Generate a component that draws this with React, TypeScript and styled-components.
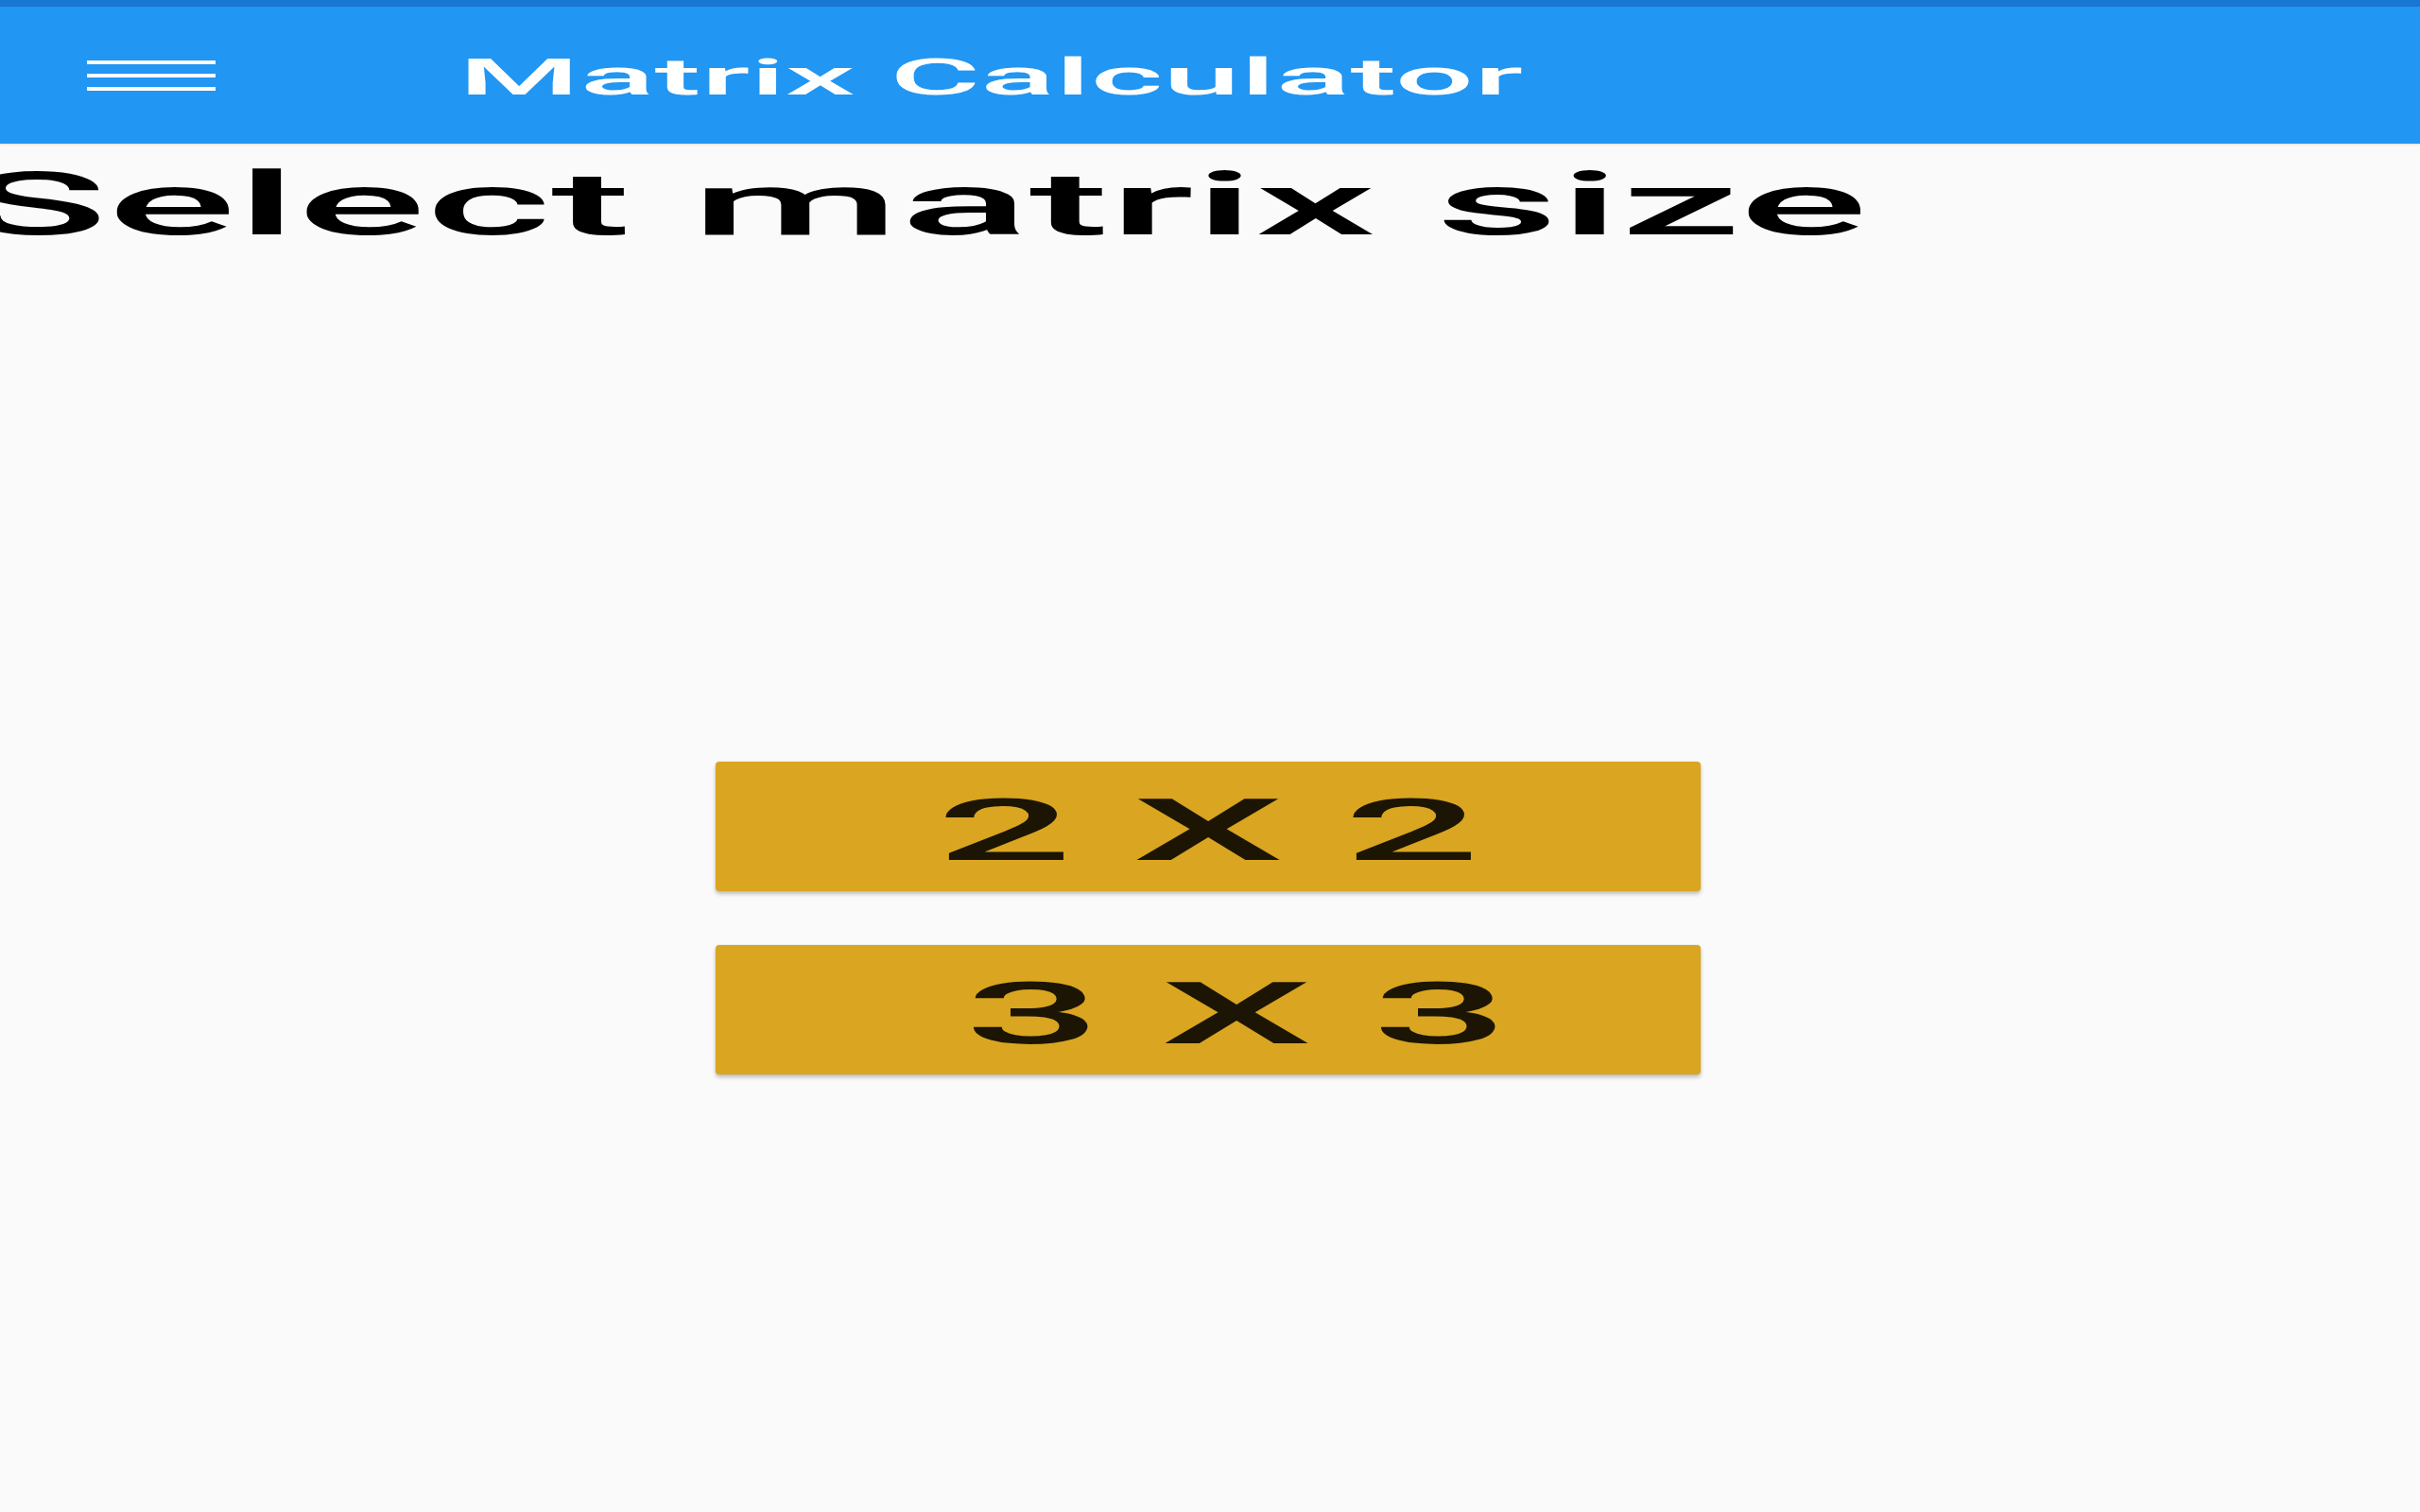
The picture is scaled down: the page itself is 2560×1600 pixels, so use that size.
import React, { useLayoutEffect, useRef, useState } from "react";
import styled, { createGlobalStyle } from "styled-components";

const GlobalStyle = createGlobalStyle`
  html, body {
    margin: 0;
    padding: 0;
    background: #fafafa;
    font-family: Roboto, "Liberation Sans", sans-serif;
    overflow: hidden;
  }
`;

const Screen = styled.div`
  width: 2560px;
  height: 1600px;
  display: flex;
  flex-direction: column;
  background: #fafafa;
  overflow: hidden;
`;

const StatusStrip = styled.div`
  height: 7px;
  background: #1976d2;
`;

const AppBar = styled.header`
  height: 145px;
  background: #2196f3;
  display: flex;
  align-items: center;
  box-shadow: 0 1px 2px rgba(0, 0, 0, 0.12);
`;

const MenuButton = styled.div`
  width: 136px;
  margin-left: 92px;
  display: flex;
  flex-direction: column;
  gap: 10px;
`;

const MenuBar = styled.span`
  display: block;
  height: 4px;
  background: #ffffff;
`;

const TitleSlot = styled.div`
  margin-left: 257px;
  padding-top: 5px;
  width: 1125px;
`;

const StretchSpan = styled.span<{ $size: number; $weight: number; $color: string; $origin: string }>`
  display: inline-block;
  white-space: pre;
  font-size: ${({ $size }) => $size}px;
  font-weight: ${({ $weight }) => $weight};
  line-height: 1;
  color: ${({ $color }) => $color};
  transform-origin: ${({ $origin }) => $origin};
`;

const Heading = styled.div`
  margin: 18px 0 0 -40px;
  width: 2015px;
  height: 93px;
`;

const SizeList = styled.div`
  margin-top: 543px;
  display: flex;
  flex-direction: column;
  align-items: flex-start;
  padding-left: 757px;
  gap: 57px;
`;

const SizeButton = styled.button<{ $shift: number }>`
  width: 1042px;
  height: 137px;
  border: none;
  border-radius: 4px;
  background: #daa520;
  box-shadow: 0 3px 4px rgba(0, 0, 0, 0.24), 0 0 2px rgba(0, 0, 0, 0.12);
  padding: 10px 0 0 ${({ $shift }) => $shift}px;
  display: flex;
  align-items: center;
  justify-content: center;
  cursor: pointer;
  font-family: inherit;
`;

interface StretchTextProps {
  text: string;
  width: number;
  size: number;
  weight?: number;
  color: string;
  origin?: string;
}

// Android screenshot is stretched wide, so text is scaled on x to the measured width
const StretchText: React.FC<StretchTextProps> = ({
  text,
  width,
  size,
  weight = 400,
  color,
  origin = "left center",
}) => {
  const ref = useRef<HTMLSpanElement>(null);
  const [scale, setScale] = useState(2.7);

  useLayoutEffect(() => {
    const measure = () => {
      if (ref.current && ref.current.offsetWidth > 0) {
        setScale(width / ref.current.offsetWidth);
      }
    };
    measure();
    if (document.fonts) document.fonts.ready.then(measure);
  }, [width, text]);

  return (
    <StretchSpan
      ref={ref}
      $size={size}
      $weight={weight}
      $color={color}
      $origin={origin}
      style={{ transform: `scaleX(${scale})` }}
    >
      {text}
    </StretchSpan>
  );
};

const sizes = [
  { label: "2 X 2", shift: 0 },
  { label: "3 X 3", shift: 60 },
];

export default function App() {
  return (
    <>
      <GlobalStyle />
      <Screen>
        <StatusStrip />
        <AppBar>
          <MenuButton>
            <MenuBar />
            <MenuBar />
            <MenuBar />
          </MenuButton>
          <TitleSlot>
            <StretchText text="Matrix Calculator" width={1125} size={53} weight={500} color="#ffffff" />
          </TitleSlot>
        </AppBar>
        <Heading>
          <StretchText text="Select matrix size" width={2015} size={93} weight={500} color="#000000" />
        </Heading>
        <SizeList>
          {sizes.map((s) => (
            <SizeButton key={s.label} $shift={s.shift}>
              <StretchText
                text={s.label}
                width={575}
                size={91}
                weight={500}
                color="rgba(0, 0, 0, 0.87)"
                origin="center center"
              />
            </SizeButton>
          ))}
        </SizeList>
      </Screen>
    </>
  );
}
